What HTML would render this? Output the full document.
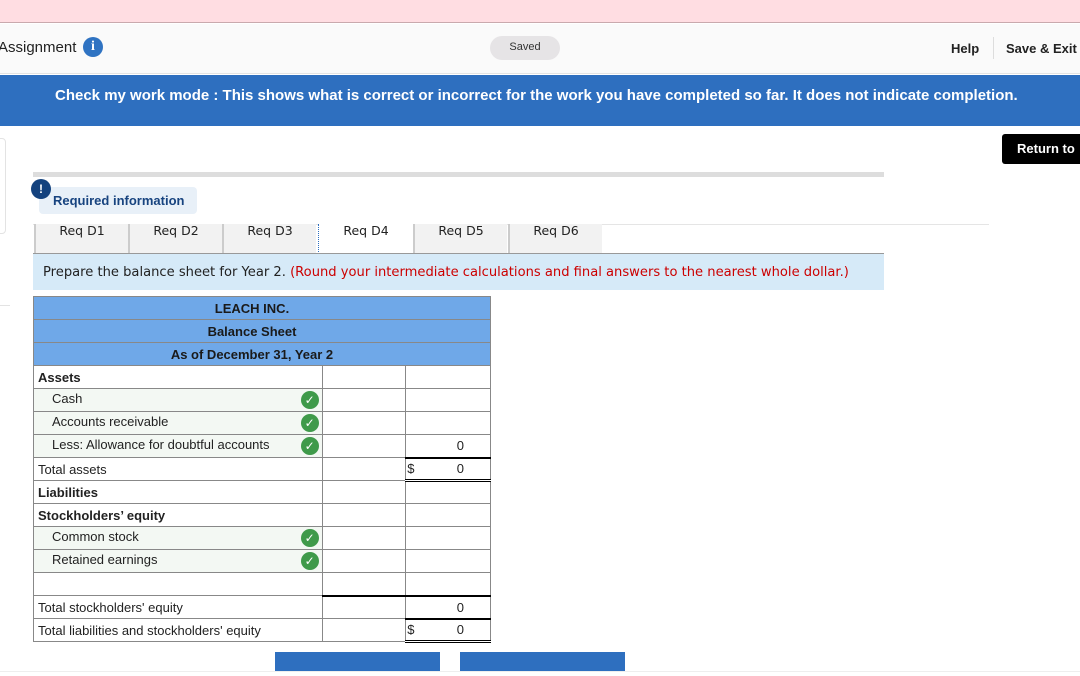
<!DOCTYPE html>
<html><head><style>
*{margin:0;padding:0;box-sizing:border-box}
body{width:1080px;height:676px;overflow:hidden;background:#fff;font-family:"Liberation Sans",sans-serif;position:relative;color:#222}
.a{position:absolute}
table{border-collapse:collapse;position:absolute;left:33px;top:296px;width:458px;font-size:13px}
td{border:1px solid #888;height:23px;padding:0 4px;white-space:nowrap}
.h td{background:#6fa8e8;text-align:center;font-weight:bold;color:#1a1a1a;padding-right:24px}
.g td.l{background:#f3f8f3;padding-left:18px}
.b{font-weight:bold}
.ck{float:right;width:18px;height:18px;border-radius:50%;background:#3f9a4a;color:#fff;font-size:12px;font-weight:bold;text-align:center;line-height:18px;margin-right:-1px;font-family:"DejaVu Sans",sans-serif}
.n{text-align:right;padding-right:26px}
.tab{position:absolute;top:224px;height:30px;width:94px;background:#f2f2f2;border-left:2px solid #ccc;font-size:12.5px;text-align:center;line-height:14px;font-family:"DejaVu Sans",sans-serif}
</style></head><body>
<div class="a" style="left:0;top:0;width:1080px;height:23px;background:#ffdde2;border-bottom:1px solid #c9a9ad"></div>
<div class="a" style="left:0;top:24px;width:1080px;height:50px;background:#fafafa;border-bottom:1px solid #e3e3e3"></div>
<div class="a" style="left:-2px;top:39px;font-size:15px;color:#222">Assignment</div>
<div class="a" style="left:83px;top:37px;width:20px;height:20px;border-radius:50%;background:#2f73c2;color:#fff;font-weight:bold;font-size:14px;text-align:center;line-height:20px;font-family:'Liberation Serif',serif">i</div>
<div class="a" style="left:490px;top:36px;width:70px;height:24px;border-radius:12px;background:#e6e4e6;font-size:11px;text-align:center;line-height:23px;color:#333">Saved</div>
<div class="a" style="left:951px;top:41px;font-size:13px;font-weight:bold">Help</div>
<div class="a" style="left:993px;top:37px;width:1px;height:22px;background:#ddd"></div>
<div class="a" style="left:1006px;top:41px;font-size:13px;font-weight:bold">Save &amp; Exit</div>
<div class="a" style="left:0;top:75px;width:1080px;height:51px;background:#2e6fbf"></div>
<div class="a" style="left:55px;top:87px;font-size:15px;font-weight:bold;color:#fff">Check my work mode : This shows what is correct or incorrect for the work you have completed so far. It does not indicate completion.</div>
<div class="a" style="left:1002px;top:134px;width:90px;height:30px;background:#000;border-radius:3px;color:#fff;font-weight:bold;font-size:13px;line-height:29px;padding-left:15px">Return to</div>
<div class="a" style="left:-10px;top:138px;width:16px;height:96px;border:1px solid #e3e3e3;border-radius:4px"></div>
<div class="a" style="left:0;top:305px;width:10px;height:1px;background:#e3e3e3"></div>
<div class="a" style="left:33px;top:172px;width:851px;height:5px;background:#ddd"></div>
<div class="a" style="left:39px;top:187px;width:158px;height:27px;background:#e8f0f8;border-radius:4px;font-size:13px;font-weight:bold;color:#17437f;padding:6px 0 0 14px">Required information</div>
<div class="a" style="left:31px;top:179px;width:20px;height:20px;border-radius:50%;background:#14427e;color:#fff;font-weight:bold;font-size:12px;text-align:center;line-height:20px">!</div>
<div class="a" style="left:33px;top:224px;width:956px;height:1px;background:#e5e5e5"></div>
<div class="tab" style="left:34px">Req D1</div>
<div class="tab" style="left:128px">Req D2</div>
<div class="tab" style="left:222px">Req D3</div>
<div class="tab" style="left:318px;background:#fff;border:1px dotted #2e6fbf;border-top:none;width:96px">Req D4</div>
<div class="tab" style="left:413px">Req D5</div>
<div class="tab" style="left:508px">Req D6</div>
<div class="a" style="left:33px;top:253px;width:851px;height:37px;background:#d6eaf8;border-top:1px solid #999;font-size:13.1px;padding:11px 0 0 10px;font-family:'DejaVu Sans',sans-serif;white-space:nowrap">Prepare the balance sheet for Year 2. <span style="color:#c00">(Round your intermediate calculations and final answers to the nearest whole dollar.)</span></div>
<table>
<colgroup><col style="width:289px"><col style="width:84px"><col style="width:85px"></colgroup>
<tr class="h"><td colspan="3">LEACH INC.</td></tr>
<tr class="h"><td colspan="3">Balance Sheet</td></tr>
<tr class="h"><td colspan="3">As of December 31, Year 2</td></tr>
<tr><td class="b">Assets</td><td></td><td></td></tr>
<tr class="g"><td class="l">Cash<span class="ck">✓</span></td><td></td><td></td></tr>
<tr class="g"><td class="l">Accounts receivable<span class="ck">✓</span></td><td></td><td></td></tr>
<tr class="g"><td class="l">Less: Allowance for doubtful accounts<span class="ck">✓</span></td><td></td><td class="n" style="border-bottom:2px solid #000">0</td></tr>
<tr><td>Total assets</td><td></td><td class="n" style="border-bottom:3px double #000"><span style="float:left;margin-left:-3px">$</span>0</td></tr>
<tr><td class="b">Liabilities</td><td></td><td></td></tr>
<tr><td class="b">Stockholders’ equity</td><td></td><td></td></tr>
<tr class="g"><td class="l">Common stock<span class="ck">✓</span></td><td></td><td></td></tr>
<tr class="g"><td class="l">Retained earnings<span class="ck">✓</span></td><td></td><td></td></tr>
<tr><td></td><td style="border-bottom:2px solid #000"></td><td style="border-bottom:2px solid #000"></td></tr>
<tr><td>Total stockholders' equity</td><td></td><td class="n" style="border-bottom:2px solid #000">0</td></tr>
<tr><td>Total liabilities and stockholders' equity</td><td></td><td class="n" style="border-bottom:3px double #000"><span style="float:left;margin-left:-3px">$</span>0</td></tr>
</table>
<div class="a" style="left:275px;top:652px;width:165px;height:24px;background:#2e6fbf"></div>
<div class="a" style="left:460px;top:652px;width:165px;height:24px;background:#2e6fbf"></div>
<div class="a" style="left:0;top:671px;width:1080px;height:5px;background:#fff;border-top:1px solid #eee"></div>
</body></html>
